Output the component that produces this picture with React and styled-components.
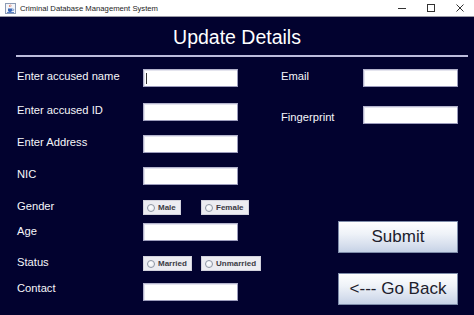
import React from "react";
import styled, { createGlobalStyle } from "styled-components";

const Global = createGlobalStyle`
  html, body { margin: 0; padding: 0; background: #02022f; }
  body { font-family: "Liberation Sans", Arial, sans-serif; }
  * { box-sizing: border-box; }
`;

const Window = styled.div`
  width: 474px;
  height: 315px;
  display: flex;
  flex-direction: column;
  background: #02022f;
  overflow: hidden;
`;

const TitleBar = styled.div`
  height: 17px;
  flex: none;
  background: #ffffff;
  border-bottom: 1px solid #9a9aa6;
  display: flex;
  align-items: center;
  padding-left: 5px;
`;

const AppIcon = styled.svg`
  width: 11px;
  height: 11px;
  flex: none;
`;

const TitleText = styled.span`
  margin-left: 4px;
  font-size: 7.7px;
  color: #1c1c1c;
  white-space: nowrap;
  flex: 1;
`;

const Controls = styled.div`
  display: flex;
  height: 100%;
`;

const CtrlBtn = styled.div`
  width: 29px;
  height: 100%;
  display: flex;
  align-items: center;
  justify-content: center;
`;

const Content = styled.div`
  flex: 1;
  display: flex;
  flex-direction: column;
`;

const Heading = styled.h1`
  margin: 7px 0 0 0;
  height: 27px;
  line-height: 27px;
  text-align: center;
  font-family: "Liberation Sans", Arial, sans-serif;
  font-weight: normal;
  font-size: 19.5px;
  color: #ffffff;
`;

const Divider = styled.div`
  height: 2px;
  margin: 4px 6px 0 16px;
  background: #bcbcdc;
`;

const Body = styled.div`
  display: flex;
  padding-top: 12px;
`;

const LeftForm = styled.div`
  width: 281px;
  padding-left: 17px;
  display: flex;
  flex-direction: column;
`;

const Row = styled.div`
  height: ${(p) => p.$h}px;
  display: grid;
  grid-template-columns: ${(p) => p.$label}px auto;
  align-items: start;
`;

const Label = styled.div`
  font-size: 11.2px;
  line-height: 14px;
  color: #f6f6fa;
  white-space: nowrap;
  margin-top: ${(p) => p.$dy || 0}px;
`;

const Field = styled.div`
  position: relative;
  width: 95px;
  height: 18px;
  background: #ffffff;
  border: 1px solid #9c9cbc;
  border-top-color: #b4b4cc;
  border-left-color: #b4b4cc;
  box-shadow: inset 1px 1px 0 #e4e4ee;
`;

const Caret = styled.span`
  position: absolute;
  left: 2px;
  top: 3px;
  width: 1px;
  height: 11px;
  background: #333;
`;

const RadioGroup = styled.div`
  display: grid;
  grid-template-columns: 58px auto;
  align-items: center;
`;

const RadioBox = styled.label`
  justify-self: start;
  height: 15px;
  display: flex;
  align-items: center;
  gap: 3px;
  padding: 0 4px 0 3px;
  background: #ececf1;
  border: 1px solid #d2d2dc;
  font-size: 8px;
  font-weight: bold;
  color: #3a3a44;
  white-space: nowrap;
`;

const RadioDot = styled.span`
  width: 8px;
  height: 8px;
  border-radius: 50%;
  border: 1px solid #8e96a4;
  background: radial-gradient(circle at 40% 35%, #ffffff 0%, #e6e8ee 100%);
  flex: none;
`;

const RightCol = styled.div`
  display: flex;
  flex-direction: column;
  width: 180px;
`;

const Button = styled.button`
  margin-left: 57px;
  width: 120px;
  height: 32px;
  margin-top: ${(p) => p.$mt}px;
  border: 1px solid #7f8daa;
  background: linear-gradient(to bottom, #ffffff 0%, #eef2f8 40%, #d8e0ee 75%, #c6d2e6 100%);
  font-family: "Liberation Sans", Arial, sans-serif;
  font-size: 17px;
  color: #20202c;
  padding: 0;
  cursor: pointer;
`;

const Radio = ({ children }) => (
  <RadioBox>
    <RadioDot />
    {children}
  </RadioBox>
);

export default function App() {
  const leftRows = [
    { label: "Enter accused name", h: 34, kind: "field", caret: true },
    { label: "Enter accused ID", h: 32, kind: "field" },
    { label: "Enter Address", h: 32, kind: "field" },
    { label: "NIC", h: 33, kind: "field" },
    { label: "Gender", h: 23, kind: "radio", opts: ["Male", "Female"], dy: -1 },
    { label: "Age", h: 33, kind: "field", dy: 1 },
    { label: "Status", h: 27, kind: "radio", opts: ["Married", "Unmarried"], dy: -1 },
    { label: "Contact", h: 18, kind: "field", dy: -2 },
  ];

  return (
    <>
      <Global />
      <Window>
        <TitleBar>
          <AppIcon viewBox="0 0 11 11">
            <rect x="0.5" y="0.5" width="10" height="10" fill="#f4f6fa" stroke="#8c9bb4" />
            <path d="M3 5.5 h4 v2.2 a2 2 0 0 1 -2 1.3 a2 2 0 0 1 -2 -1.3 z" fill="#3a68b8" />
            <path d="M7 6 h1 a0.8 0.8 0 0 1 0 1.6 h-1" fill="none" stroke="#3a68b8" strokeWidth="0.6" />
            <path d="M4.3 2 q0.8 1 0 2 M5.6 1.6 q0.8 1 0 2.2" fill="none" stroke="#d05030" strokeWidth="0.6" />
            <rect x="2" y="9" width="7" height="0.8" fill="#3a68b8" />
          </AppIcon>
          <TitleText>Criminal Database Management System</TitleText>
          <Controls>
            <CtrlBtn>
              <svg width="10" height="10" viewBox="0 0 10 10">
                <line x1="1" y1="5.5" x2="9" y2="5.5" stroke="#333" strokeWidth="1" />
              </svg>
            </CtrlBtn>
            <CtrlBtn>
              <svg width="10" height="10" viewBox="0 0 10 10">
                <rect x="1.5" y="1.5" width="7" height="7" fill="none" stroke="#333" strokeWidth="1" />
              </svg>
            </CtrlBtn>
            <CtrlBtn>
              <svg width="10" height="10" viewBox="0 0 10 10">
                <path d="M1.5 1.5 L8.5 8.5 M8.5 1.5 L1.5 8.5" stroke="#333" strokeWidth="1" />
              </svg>
            </CtrlBtn>
          </Controls>
        </TitleBar>
        <Content>
          <Heading>Update Details</Heading>
          <Divider />
          <Body>
            <LeftForm>
              {leftRows.map((r) => (
                <Row key={r.label} $h={r.h} $label={126}>
                  <Label $dy={r.dy}>{r.label}</Label>
                  {r.kind === "field" ? (
                    <Field>{r.caret && <Caret />}</Field>
                  ) : (
                    <RadioGroup>
                      <Radio>{r.opts[0]}</Radio>
                      <Radio>{r.opts[1]}</Radio>
                    </RadioGroup>
                  )}
                </Row>
              ))}
            </LeftForm>
            <RightCol>
              <Row $h={37} $label={82}>
                <Label>Email</Label>
                <Field />
              </Row>
              <Row $h={18} $label={82}>
                <Label $dy={4}>Fingerprint</Label>
                <Field />
              </Row>
              <Button $mt={97}>Submit</Button>
              <Button $mt={20}>&lt;--- Go Back</Button>
            </RightCol>
          </Body>
        </Content>
      </Window>
    </>
  );
}
